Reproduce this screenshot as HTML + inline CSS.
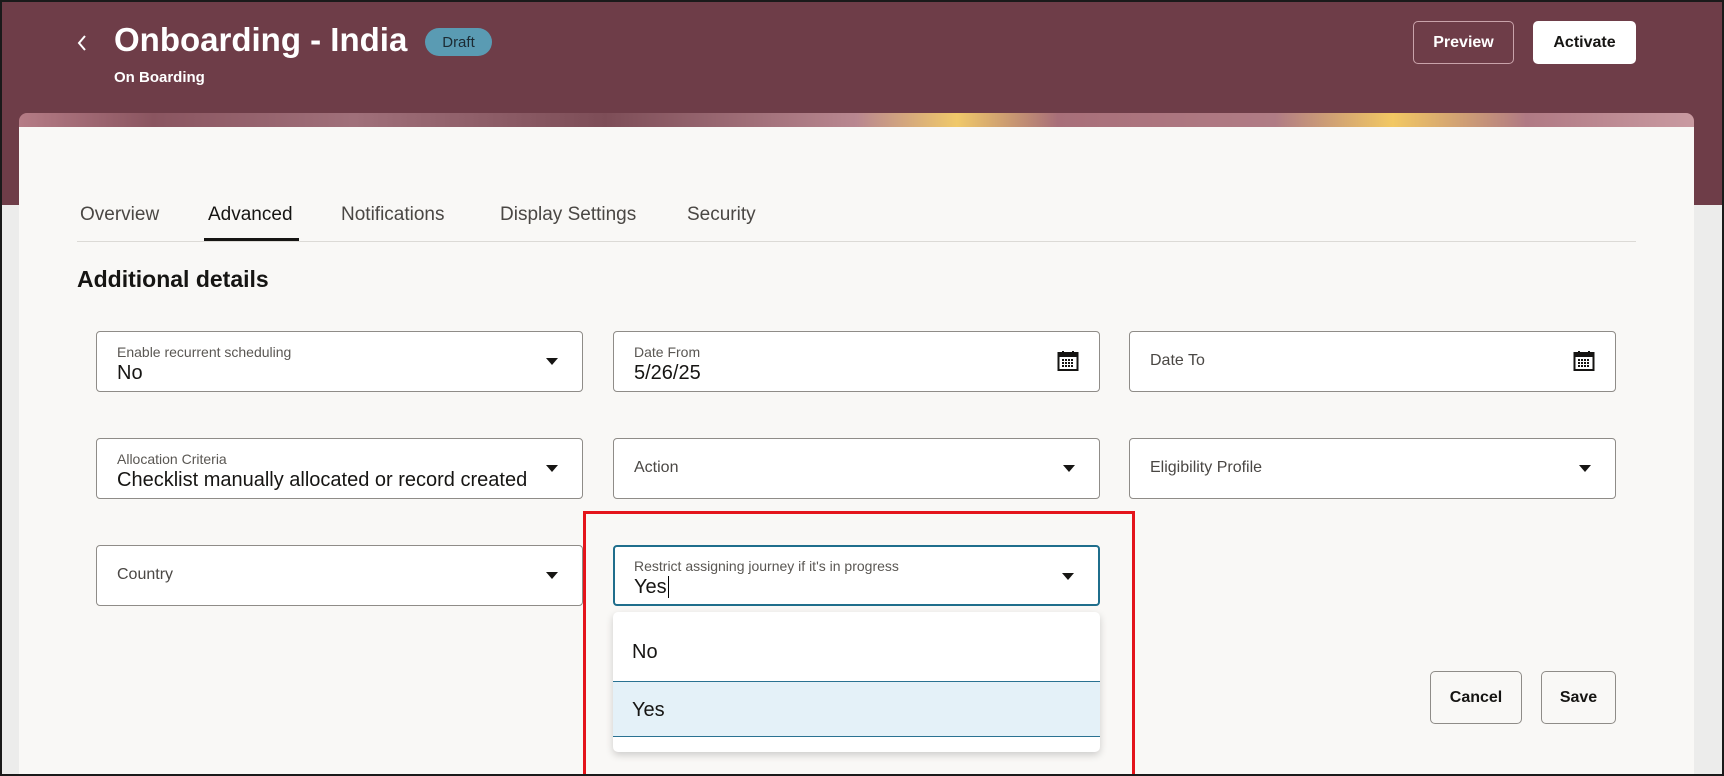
<!DOCTYPE html>
<html><head><meta charset="utf-8"><style>
*{box-sizing:border-box;margin:0;padding:0}
html,body{width:1724px;height:776px;overflow:hidden}
body{position:relative;background:#ececeb;font-family:"Liberation Sans",sans-serif;color:#161513}
.a{position:absolute}
.hdr{left:0;top:0;width:1724px;height:205px;background:#6e3d48}
.banner{left:19px;top:113px;width:1675px;height:20px;border-radius:8px 8px 0 0;background:linear-gradient(90deg,#b57c86 0,#8a5560 8%,#a0707a 20%,#7d4d57 35%,#b98790 50%,#f0c96a 56%,#a86f79 62%,#b07c85 75%,#f2c863 82%,#b07a84 90%,#c99aa1 100%)}
.card{left:19px;top:127px;width:1675px;height:649px;background:#f9f8f6}
.fld{position:absolute;width:487px;height:61px;background:#fff;border:1px solid #8f8c88;border-radius:4px}
.lbl{position:absolute;left:20px;top:12px;font-size:14px;color:#5a5753}
.val{position:absolute;left:20px;top:30px;font-size:20px;color:#161513}
.ph{position:absolute;left:20px;top:20px;font-size:16px;color:#4a4744}
.car{position:absolute;right:24px;top:26px;width:0;height:0;border-left:6px solid transparent;border-right:6px solid transparent;border-top:7px solid #161513}
.cal{position:absolute;right:20px;top:18px}
.btn{position:absolute;border:1px solid #8f8c88;border-radius:5px;font-weight:bold;font-size:16px;display:flex;align-items:center;justify-content:center}
.tab{position:absolute;top:204px;font-size:19px;color:#4a4744}
</style></head><body>
<div class="a hdr"></div>
<svg class="a" style="left:76px;top:33px" width="12" height="20" viewBox="0 0 12 20"><path d="M9 3 L3 10 L9 17" fill="none" stroke="#fff" stroke-width="2"/></svg>
<div class="a" style="left:114px;top:21px;color:#fff;font-size:33px;font-weight:bold">Onboarding - India</div>
<div class="a" style="left:425px;top:28px;width:67px;height:28px;border-radius:14px;background:#5a9bb3;color:#1c2b33;font-size:15px;display:flex;align-items:center;justify-content:center">Draft</div>
<div class="a" style="left:114px;top:69px;color:#fff;font-size:15px;font-weight:bold">On Boarding</div>
<div class="btn" style="left:1413px;top:21px;width:101px;height:43px;border-color:#c9a3aa;color:#fff">Preview</div>
<div class="btn" style="left:1533px;top:21px;width:103px;height:43px;background:#fff;border-color:#fff;color:#161513;font-weight:bold">Activate</div>
<div class="a banner"></div>
<div class="a card"></div>
<div class="tab" style="left:80px">Overview</div>
<div class="tab" style="left:208px;color:#161513">Advanced</div>
<div class="tab" style="left:341px">Notifications</div>
<div class="tab" style="left:500px">Display Settings</div>
<div class="tab" style="left:687px">Security</div>
<div class="a" style="left:77px;top:241px;width:1559px;height:1px;background:#dcdad6"></div>
<div class="a" style="left:204px;top:238px;width:95px;height:3px;background:#161513"></div>
<div class="a" style="left:77px;top:266px;font-size:23px;font-weight:bold">Additional details</div>

<div class="fld" style="left:96px;top:331px"><div class="lbl">Enable recurrent scheduling</div><div class="val">No</div><div class="car"></div></div>
<div class="fld" style="left:613px;top:331px"><div class="lbl">Date From</div><div class="val">5/26/25</div><svg class="cal" width="22" height="22" viewBox="0 0 22 22"><rect x="1.5" y="3" width="19" height="17" fill="#fff" stroke="#161513" stroke-width="2"/><rect x="1.5" y="3" width="19" height="4" fill="#161513"/><path d="M6 1v4M16 1v4" stroke="#161513" stroke-width="2"/><g fill="#161513"><rect x="5" y="9" width="2" height="2"/><rect x="8" y="9" width="2" height="2"/><rect x="11" y="9" width="2" height="2"/><rect x="14" y="9" width="2" height="2"/><rect x="5" y="12" width="2" height="2"/><rect x="8" y="12" width="2" height="2"/><rect x="11" y="12" width="2" height="2"/><rect x="14" y="12" width="2" height="2"/><rect x="5" y="15" width="2" height="2"/><rect x="8" y="15" width="2" height="2"/><rect x="11" y="15" width="2" height="2"/><rect x="14" y="15" width="2" height="2"/></g></svg></div>
<div class="fld" style="left:1129px;top:331px"><div class="ph">Date To</div><svg class="cal" width="22" height="22" viewBox="0 0 22 22"><rect x="1.5" y="3" width="19" height="17" fill="#fff" stroke="#161513" stroke-width="2"/><rect x="1.5" y="3" width="19" height="4" fill="#161513"/><path d="M6 1v4M16 1v4" stroke="#161513" stroke-width="2"/><g fill="#161513"><rect x="5" y="9" width="2" height="2"/><rect x="8" y="9" width="2" height="2"/><rect x="11" y="9" width="2" height="2"/><rect x="14" y="9" width="2" height="2"/><rect x="5" y="12" width="2" height="2"/><rect x="8" y="12" width="2" height="2"/><rect x="11" y="12" width="2" height="2"/><rect x="14" y="12" width="2" height="2"/><rect x="5" y="15" width="2" height="2"/><rect x="8" y="15" width="2" height="2"/><rect x="11" y="15" width="2" height="2"/><rect x="14" y="15" width="2" height="2"/></g></svg></div>

<div class="fld" style="left:96px;top:438px"><div class="lbl">Allocation Criteria</div><div class="val">Checklist manually allocated or record created</div><div class="car"></div></div>
<div class="fld" style="left:613px;top:438px"><div class="ph">Action</div><div class="car"></div></div>
<div class="fld" style="left:1129px;top:438px"><div class="ph">Eligibility Profile</div><div class="car"></div></div>

<div class="fld" style="left:96px;top:545px"><div class="ph">Country</div><div class="car"></div></div>
<div class="fld" style="left:613px;top:545px;border:2px solid #1f6e8c"><div class="lbl" style="left:19px;top:11px">Restrict assigning journey if it's in progress</div><div class="val" style="left:19px;top:29px">Yes<span style="border-left:1px solid #000;margin-left:1px"></span></div><div class="car"></div></div>

<div class="a" style="left:613px;top:612px;width:487px;height:140px;background:#fff;border-radius:5px;box-shadow:0 3px 8px rgba(0,0,0,.18)">
<div class="a" style="left:19px;top:29px;font-size:20px">No</div>
<div class="a" style="left:0;top:69px;width:487px;height:56px;background:#e4f1f8;border-top:1.5px solid #2a7292;border-bottom:1.5px solid #2a7292"></div>
<div class="a" style="left:19px;top:87px;font-size:20px">Yes</div>
</div>

<div class="a" style="left:583px;top:511px;width:552px;height:265px;border:3px solid #e4141b;border-bottom:none"></div>

<div class="btn" style="left:1430px;top:671px;width:92px;height:53px">Cancel</div>
<div class="btn" style="left:1541px;top:671px;width:75px;height:53px">Save</div>
<div class="a" style="left:0;top:0;width:1724px;height:776px;border:2px solid #1a1a1a"></div>
</body></html>
